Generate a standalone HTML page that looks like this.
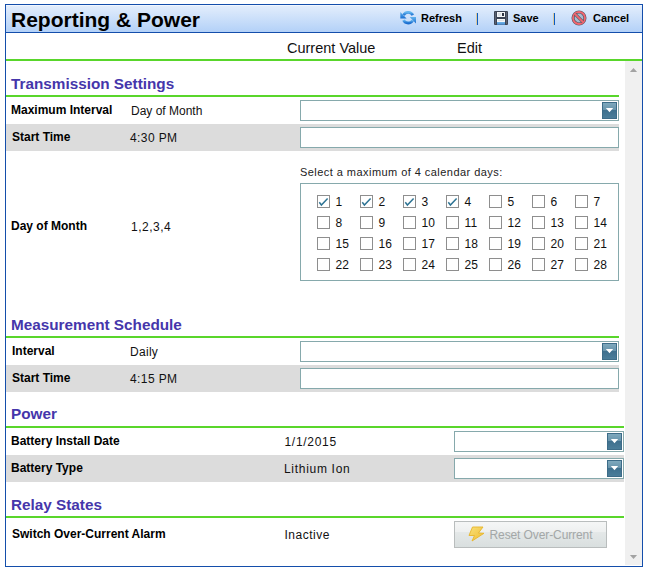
<!DOCTYPE html>
<html><head><meta charset="utf-8">
<style>
html,body{margin:0;padding:0;background:#fff;width:647px;height:572px;overflow:hidden;position:relative;font-family:"Liberation Sans",sans-serif;}
.t{position:absolute;line-height:1;white-space:nowrap;}
.a{position:absolute;}
.frame{position:absolute;left:5px;top:4px;width:636px;height:561px;border:1px solid #144eab;}
.hdr{position:absolute;left:6px;top:5px;width:636px;height:27px;background:linear-gradient(#e4eefc,#b3d1f8);border-bottom:1px solid #144eab;}
.hdr:before{content:"";position:absolute;left:0;top:0;right:0;height:1px;background:#f2f7ff;}
.green{position:absolute;height:2px;background:#59d62b;}
.gray{position:absolute;background:#dcdcdc;}
.box{position:absolute;border:1px solid #86a9ac;background:#fff;box-sizing:border-box;}


.cb{position:absolute;width:13px;height:13px;box-sizing:border-box;border:1px solid #8e8e8e;background:#fff;}
.sb{position:absolute;left:625px;top:61px;width:17px;height:504px;background:#f0f0f0;}
</style></head><body>
<svg width="0" height="0" style="position:absolute"><defs><linearGradient id="ddg" x1="0" y1="0" x2="0" y2="1"><stop offset="0" stop-color="#80aabe"/><stop offset="0.44" stop-color="#6995ac"/><stop offset="0.46" stop-color="#3e6f8d"/><stop offset="1" stop-color="#4b7e9a"/></linearGradient></defs></svg>
<div class="frame"></div>
<div class="hdr"></div>
<div class="t" style="left:11px;top:8.82px;font-size:21px;font-weight:700;color:#000;letter-spacing:0px;">Reporting &amp; Power</div>
<svg class="a" style="left:400px;top:11px" width="17" height="14" viewBox="0 0 17 14">
<defs><linearGradient id="rg" x1="0" y1="0" x2="0" y2="1"><stop offset="0" stop-color="#62b4ee"/><stop offset="1" stop-color="#1a6ed0"/></linearGradient></defs>
<path d="M3.56 4.05 A5.3 5.3 0 0 1 12.83 4.21" fill="none" stroke="url(#rg)" stroke-width="2.8"/>
<path d="M0.3 1 L0.3 7.5 L6.6 7.5 Z" fill="url(#rg)"/>
<path d="M12.74 9.35 A5.3 5.3 0 0 1 3.47 9.19" fill="none" stroke="url(#rg)" stroke-width="2.8"/>
<path d="M16 12.4 L16 5.9 L9.7 5.9 Z" fill="url(#rg)"/>
</svg>
<div class="t" style="left:421px;top:13.39px;font-size:11px;font-weight:700;color:#000;letter-spacing:0px;">Refresh</div>
<div class="a" style="left:476px;top:13px;width:1px;height:12px;background:#dcc89a"></div><div class="a" style="left:477px;top:13px;width:1px;height:12px;background:#0b5cc2"></div>
<svg class="a" style="left:494px;top:11px" width="14" height="14" viewBox="0 0 14 14">
<rect x="0" y="0" width="14" height="14" rx="1" fill="#3c4455"/>
<rect x="1" y="1" width="1" height="12" fill="#5a6272"/>
<rect x="12" y="1" width="1" height="12" fill="#5a6272"/>
<rect x="3" y="1" width="8" height="5" fill="#f4f6f8"/>
<rect x="4" y="2" width="3" height="3" fill="#dde2e8"/>
<rect x="8" y="2" width="2" height="3" fill="#2e3544"/>
<rect x="3" y="8" width="8" height="3" fill="#f6f7f9"/>
<rect x="4" y="9" width="6" height="0.6" fill="#d0d4da"/>
<rect x="3" y="11" width="8" height="2.5" fill="#6aaee6"/>
<rect x="3" y="12.5" width="8" height="1" fill="#4a8ed6"/>
</svg>
<div class="t" style="left:513px;top:13.39px;font-size:11px;font-weight:700;color:#000;letter-spacing:0px;">Save</div>
<div class="a" style="left:553px;top:13px;width:1px;height:12px;background:#dcc89a"></div><div class="a" style="left:554px;top:13px;width:1px;height:12px;background:#0b5cc2"></div>
<svg class="a" style="left:571px;top:10px" width="16" height="16" viewBox="0 0 16 16">
<circle cx="8" cy="8" r="5.95" fill="#a9bbd0" stroke="#4f5866" stroke-width="3.1"/>
<circle cx="8" cy="8" r="6" fill="none" stroke="#f2666f" stroke-width="1.8"/>
<path d="M3.9 3.9 L12.1 12.1" stroke="#4f5866" stroke-width="3.0"/>
<path d="M3.5 3.5 L12.5 12.5" stroke="#f2666f" stroke-width="1.8"/>
</svg>
<div class="t" style="left:593px;top:13.39px;font-size:11px;font-weight:700;color:#000;letter-spacing:0px;">Cancel</div>
<div class="t" style="left:287px;top:40.73px;font-size:14.5px;font-weight:400;color:#111;letter-spacing:0px;">Current Value</div>
<div class="t" style="left:457px;top:40.73px;font-size:14.5px;font-weight:400;color:#111;letter-spacing:0px;">Edit</div>
<div class="green" style="left:6px;top:59px;width:636px"></div>
<div class="sb"></div>
<svg class="a" style="left:629px;top:67px" width="9" height="6"><polygon points="0.9,5 8.1,5 4.5,1" fill="#a3a3a3"/></svg>
<svg class="a" style="left:629px;top:554px" width="9" height="6"><polygon points="0.9,1 8.1,1 4.5,5" fill="#a3a3a3"/></svg>
<div class="t" style="left:11px;top:76.05px;font-size:15.3px;font-weight:700;color:#4536ab;letter-spacing:0px;">Transmission Settings</div>
<div class="green" style="left:6px;top:95px;width:613px"></div>
<div class="t" style="left:11px;top:104.14px;font-size:12px;font-weight:700;color:#000;letter-spacing:0px;">Maximum Interval</div>
<div class="t" style="left:131px;top:104.54px;font-size:12px;font-weight:400;color:#111;letter-spacing:0px;">Day of Month</div>
<div class="box" style="left:300px;top:100px;width:319px;height:21px"></div><svg class="a" style="left:602px;top:102px" width="15" height="17"><rect x="0.5" y="0.5" width="14" height="16" fill="url(#ddg)" stroke="#3d6c88"/><polygon points="3.8,6 11.2,6 7.5,10.2" fill="#fff"/></svg>
<div class="gray" style="left:6px;top:124px;width:613px;height:27px"></div>
<div class="t" style="left:12px;top:130.84px;font-size:12px;font-weight:700;color:#000;letter-spacing:0px;">Start Time</div>
<div class="t" style="left:130px;top:131.84px;font-size:12px;font-weight:400;color:#111;letter-spacing:0.4px;">4:30 PM</div>
<div class="box" style="left:300px;top:127px;width:319px;height:21px"></div>
<div class="t" style="left:300px;top:167.39px;font-size:11px;font-weight:400;color:#222;letter-spacing:0.45px;">Select a maximum of 4 calendar days:</div>
<div class="box" style="left:300px;top:183px;width:319px;height:98px"></div>
<div class="cb" style="left:317px;top:195px"></div><svg class="a" style="left:317px;top:195px" width="13" height="13"><path d="M2.3 7.3 L4.4 10 L10.6 3.6" fill="none" stroke="#2e7494" stroke-width="1.5"/></svg><div class="t" style="left:335.6px;top:195.64px;font-size:12px;font-weight:400;color:#111;letter-spacing:0px;">1</div>
<div class="cb" style="left:360px;top:195px"></div><svg class="a" style="left:360px;top:195px" width="13" height="13"><path d="M2.3 7.3 L4.4 10 L10.6 3.6" fill="none" stroke="#2e7494" stroke-width="1.5"/></svg><div class="t" style="left:378.6px;top:195.64px;font-size:12px;font-weight:400;color:#111;letter-spacing:0px;">2</div>
<div class="cb" style="left:403px;top:195px"></div><svg class="a" style="left:403px;top:195px" width="13" height="13"><path d="M2.3 7.3 L4.4 10 L10.6 3.6" fill="none" stroke="#2e7494" stroke-width="1.5"/></svg><div class="t" style="left:421.6px;top:195.64px;font-size:12px;font-weight:400;color:#111;letter-spacing:0px;">3</div>
<div class="cb" style="left:446px;top:195px"></div><svg class="a" style="left:446px;top:195px" width="13" height="13"><path d="M2.3 7.3 L4.4 10 L10.6 3.6" fill="none" stroke="#2e7494" stroke-width="1.5"/></svg><div class="t" style="left:464.6px;top:195.64px;font-size:12px;font-weight:400;color:#111;letter-spacing:0px;">4</div>
<div class="cb" style="left:489px;top:195px"></div><div class="t" style="left:507.6px;top:195.64px;font-size:12px;font-weight:400;color:#111;letter-spacing:0px;">5</div>
<div class="cb" style="left:532px;top:195px"></div><div class="t" style="left:550.6px;top:195.64px;font-size:12px;font-weight:400;color:#111;letter-spacing:0px;">6</div>
<div class="cb" style="left:575px;top:195px"></div><div class="t" style="left:593.6px;top:195.64px;font-size:12px;font-weight:400;color:#111;letter-spacing:0px;">7</div>
<div class="cb" style="left:317px;top:216px"></div><div class="t" style="left:335.6px;top:216.64px;font-size:12px;font-weight:400;color:#111;letter-spacing:0px;">8</div>
<div class="cb" style="left:360px;top:216px"></div><div class="t" style="left:378.6px;top:216.64px;font-size:12px;font-weight:400;color:#111;letter-spacing:0px;">9</div>
<div class="cb" style="left:403px;top:216px"></div><div class="t" style="left:421.6px;top:216.64px;font-size:12px;font-weight:400;color:#111;letter-spacing:0px;">10</div>
<div class="cb" style="left:446px;top:216px"></div><div class="t" style="left:464.6px;top:216.64px;font-size:12px;font-weight:400;color:#111;letter-spacing:0px;">11</div>
<div class="cb" style="left:489px;top:216px"></div><div class="t" style="left:507.6px;top:216.64px;font-size:12px;font-weight:400;color:#111;letter-spacing:0px;">12</div>
<div class="cb" style="left:532px;top:216px"></div><div class="t" style="left:550.6px;top:216.64px;font-size:12px;font-weight:400;color:#111;letter-spacing:0px;">13</div>
<div class="cb" style="left:575px;top:216px"></div><div class="t" style="left:593.6px;top:216.64px;font-size:12px;font-weight:400;color:#111;letter-spacing:0px;">14</div>
<div class="cb" style="left:317px;top:237px"></div><div class="t" style="left:335.6px;top:237.64px;font-size:12px;font-weight:400;color:#111;letter-spacing:0px;">15</div>
<div class="cb" style="left:360px;top:237px"></div><div class="t" style="left:378.6px;top:237.64px;font-size:12px;font-weight:400;color:#111;letter-spacing:0px;">16</div>
<div class="cb" style="left:403px;top:237px"></div><div class="t" style="left:421.6px;top:237.64px;font-size:12px;font-weight:400;color:#111;letter-spacing:0px;">17</div>
<div class="cb" style="left:446px;top:237px"></div><div class="t" style="left:464.6px;top:237.64px;font-size:12px;font-weight:400;color:#111;letter-spacing:0px;">18</div>
<div class="cb" style="left:489px;top:237px"></div><div class="t" style="left:507.6px;top:237.64px;font-size:12px;font-weight:400;color:#111;letter-spacing:0px;">19</div>
<div class="cb" style="left:532px;top:237px"></div><div class="t" style="left:550.6px;top:237.64px;font-size:12px;font-weight:400;color:#111;letter-spacing:0px;">20</div>
<div class="cb" style="left:575px;top:237px"></div><div class="t" style="left:593.6px;top:237.64px;font-size:12px;font-weight:400;color:#111;letter-spacing:0px;">21</div>
<div class="cb" style="left:317px;top:258px"></div><div class="t" style="left:335.6px;top:258.64px;font-size:12px;font-weight:400;color:#111;letter-spacing:0px;">22</div>
<div class="cb" style="left:360px;top:258px"></div><div class="t" style="left:378.6px;top:258.64px;font-size:12px;font-weight:400;color:#111;letter-spacing:0px;">23</div>
<div class="cb" style="left:403px;top:258px"></div><div class="t" style="left:421.6px;top:258.64px;font-size:12px;font-weight:400;color:#111;letter-spacing:0px;">24</div>
<div class="cb" style="left:446px;top:258px"></div><div class="t" style="left:464.6px;top:258.64px;font-size:12px;font-weight:400;color:#111;letter-spacing:0px;">25</div>
<div class="cb" style="left:489px;top:258px"></div><div class="t" style="left:507.6px;top:258.64px;font-size:12px;font-weight:400;color:#111;letter-spacing:0px;">26</div>
<div class="cb" style="left:532px;top:258px"></div><div class="t" style="left:550.6px;top:258.64px;font-size:12px;font-weight:400;color:#111;letter-spacing:0px;">27</div>
<div class="cb" style="left:575px;top:258px"></div><div class="t" style="left:593.6px;top:258.64px;font-size:12px;font-weight:400;color:#111;letter-spacing:0px;">28</div>
<div class="t" style="left:11px;top:220.14px;font-size:12px;font-weight:700;color:#000;letter-spacing:0px;">Day of Month</div>
<div class="t" style="left:131px;top:220.84px;font-size:12px;font-weight:400;color:#111;letter-spacing:0.5px;">1,2,3,4</div>
<div class="t" style="left:11px;top:316.55px;font-size:15.3px;font-weight:700;color:#4536ab;letter-spacing:0px;">Measurement Schedule</div>
<div class="green" style="left:6px;top:336px;width:613px"></div>
<div class="t" style="left:12px;top:345.14px;font-size:12px;font-weight:700;color:#000;letter-spacing:0px;">Interval</div>
<div class="t" style="left:130px;top:345.54px;font-size:12px;font-weight:400;color:#111;letter-spacing:0.3px;">Daily</div>
<div class="box" style="left:300px;top:341px;width:319px;height:21px"></div><svg class="a" style="left:602px;top:343px" width="15" height="17"><rect x="0.5" y="0.5" width="14" height="16" fill="url(#ddg)" stroke="#3d6c88"/><polygon points="3.8,6 11.2,6 7.5,10.2" fill="#fff"/></svg>
<div class="gray" style="left:6px;top:365px;width:613px;height:27px"></div>
<div class="t" style="left:12px;top:372.14px;font-size:12px;font-weight:700;color:#000;letter-spacing:0px;">Start Time</div>
<div class="t" style="left:130px;top:372.84px;font-size:12px;font-weight:400;color:#111;letter-spacing:0.4px;">4:15 PM</div>
<div class="box" style="left:300px;top:368px;width:319px;height:21px"></div>
<div class="t" style="left:11px;top:406.25px;font-size:15.3px;font-weight:700;color:#4536ab;letter-spacing:0px;">Power</div>
<div class="green" style="left:6px;top:426px;width:618px"></div>
<div class="t" style="left:11px;top:434.64px;font-size:12px;font-weight:700;color:#000;letter-spacing:0px;">Battery Install Date</div>
<div class="t" style="left:284.5px;top:436.14px;font-size:12px;font-weight:400;color:#111;letter-spacing:0.7px;">1/1/2015</div>
<div class="box" style="left:454px;top:431px;width:170px;height:21px"></div><svg class="a" style="left:607px;top:433px" width="15" height="17"><rect x="0.5" y="0.5" width="14" height="16" fill="url(#ddg)" stroke="#3d6c88"/><polygon points="3.8,6 11.2,6 7.5,10.2" fill="#fff"/></svg>
<div class="gray" style="left:6px;top:455px;width:618px;height:27px"></div>
<div class="t" style="left:11px;top:461.84px;font-size:12px;font-weight:700;color:#000;letter-spacing:0px;">Battery Type</div>
<div class="t" style="left:284px;top:463.04px;font-size:12px;font-weight:400;color:#111;letter-spacing:0.7px;">Lithium Ion</div>
<div class="box" style="left:454px;top:458px;width:170px;height:21px"></div><svg class="a" style="left:607px;top:460px" width="15" height="17"><rect x="0.5" y="0.5" width="14" height="16" fill="url(#ddg)" stroke="#3d6c88"/><polygon points="3.8,6 11.2,6 7.5,10.2" fill="#fff"/></svg>
<div class="t" style="left:11px;top:497.05px;font-size:15.3px;font-weight:700;color:#4536ab;letter-spacing:0px;">Relay States</div>
<div class="green" style="left:6px;top:516px;width:618px"></div>
<div class="t" style="left:12px;top:527.84px;font-size:12px;font-weight:700;color:#000;letter-spacing:0px;">Switch Over-Current Alarm</div>
<div class="t" style="left:284.5px;top:529.04px;font-size:12px;font-weight:400;color:#111;letter-spacing:0.5px;">Inactive</div>
<div class="a" style="left:454px;top:521px;width:153px;height:27px;box-sizing:border-box;border:1px solid #b9bdbd;background:linear-gradient(#f5f6f6 0,#eef0f0 38%,#e4e8e8 42%,#d9dfdf 100%)"></div>
<svg class="a" style="left:468px;top:526px" width="17" height="16" viewBox="0 0 17 16"><defs><linearGradient id="lg" x1="0" y1="0" x2="1" y2="1"><stop offset="0" stop-color="#f8e07a"/><stop offset="1" stop-color="#f0bc30"/></linearGradient></defs><path d="M4.5 1 L15 1 L10.5 7 L16 7.3 L4 15 L6.5 9.5 L1 9.5 Z" fill="url(#lg)" stroke="#e8b52a" stroke-width="0.9"/></svg>
<div class="t" style="left:489.5px;top:529.04px;font-size:12px;font-weight:400;color:#a3a7a7;letter-spacing:-0.1px;">Reset Over-Current</div>
</body></html>
